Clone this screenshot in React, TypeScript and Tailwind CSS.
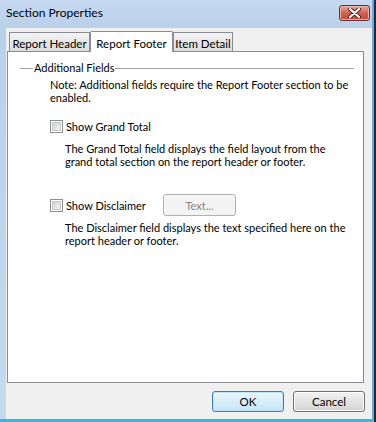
import React from 'react'

const font = { fontFamily: 'Lato, "Noto Sans", sans-serif' }

function CheckBox() {
  return (
    <span className="inline-flex h-[13px] w-[13px] shrink-0 items-center justify-center border border-[#8e8f8f] bg-white">
      <span className="h-[9px] w-[9px] border border-[#c7c9cc] bg-gradient-to-br from-[#cfd1d3] to-[#f4f4f4]" />
    </span>
  )
}

function Tab({ label, active, width }: { label: string; active?: boolean; width: string }) {
  if (active) {
    return (
      <div
        className={`relative z-10 -mb-px flex h-[21px] ${width} items-start justify-center whitespace-nowrap rounded-t-[2px] border border-b-0 border-[#898c95] bg-white pt-[3px] text-[11.5px] text-black`}
      >
        {label}
      </div>
    )
  }
  return (
    <div
      className={`flex h-[19px] ${width} items-start justify-center whitespace-nowrap border border-b-0 border-[#898c95] bg-gradient-to-b from-[#f3f3f3] to-[#dcdcdc] pt-[2px] text-[11.5px] text-black`}
    >
      {label}
    </div>
  )
}

function Button({ label, primary }: { label: string; primary?: boolean }) {
  return (
    <div
      className={`flex h-[21px] w-[72px] items-center justify-center rounded-[3px] border text-[11.5px] text-black ${
        primary
          ? 'border-[#3c7fb1] bg-gradient-to-b from-[#eaf6fd] to-[#c4e5f6] shadow-[inset_0_0_0_1px_#c1e4f7]'
          : 'border-[#707070] bg-gradient-to-b from-[#f2f2f2] to-[#d4d4d4] shadow-[inset_0_0_0_1px_#fcfcfc]'
      }`}
    >
      {label}
    </div>
  )
}

export default function App() {
  return (
    <div className="flex h-[422px] w-[376px] bg-[#1e2a36]" style={font}>
      <div className="flex h-[422px] w-[374px] flex-col border-r-2 border-[#6ea9de]">
        {/* title bar */}
        <div className="flex h-[28px] shrink-0 items-start bg-gradient-to-b from-[#c5daf0] to-[#b9d0e9] pl-[6px]">
          <span className="pt-[5px] text-[12px] leading-[15px] text-black">Section Properties</span>
          <div className="ml-auto mr-[2px] mt-[5px] flex h-[16px] w-[31px] items-center justify-center rounded-[3px] border border-[#6b3030] bg-gradient-to-b from-[#e7a89c] via-[#d2604f] to-[#c44a36] shadow-[inset_0_0_0_1px_#eab2a8]">
            <svg width="13" height="10" viewBox="0 0 13 10">
              <path d="M2 1 L11 9 M11 1 L2 9" stroke="#4a2020" strokeWidth="4" strokeLinecap="round" />
              <path d="M2 1 L11 9 M11 1 L2 9" stroke="#ffffff" strokeWidth="2.2" strokeLinecap="round" />
            </svg>
          </div>
        </div>

        <div className="flex flex-1">
          <div className="w-[6px] shrink-0 bg-gradient-to-b from-[#b9d0e9] to-[#c5daf0]" />
          <div className="flex flex-1 flex-col bg-[#f0f0f0] pl-px">
            {/* tabs */}
            <div className="mt-[3px] flex items-end pl-[2px]">
              <Tab label="Report Header" width="w-[81px]" />
              <Tab label="Report Footer" width="w-[83px]" active />
              <Tab label="Item Detail" width="w-[60px]" />
            </div>

            {/* panel */}
            <div className="h-[332px] w-[357px] border border-[#898c95] bg-white text-[11px] leading-[13px] text-black">
              <div className="mt-[9px] flex h-[14px] items-center pl-[12px] pr-[9px]">
                <div className="h-px w-[13px] bg-[#a0a0a0]" />
                <span className="px-[1px] text-[11px] leading-[14px]">Additional Fields</span>
                <div className="h-px flex-1 bg-[#a0a0a0]" />
              </div>

              <p className="ml-[42px] mt-[3px] whitespace-nowrap">
                Note: Additional fields require the Report Footer section to be
                <br />
                enabled.
              </p>

              <div className="ml-[42px] mt-[15px] flex h-[14px] items-center gap-[3px]">
                <CheckBox />
                <span>Show Grand Total</span>
              </div>
              <p className="ml-[57px] mt-[9px] whitespace-nowrap">
                The Grand Total field displays the field layout from the
                <br />
                grand total section on the report header or footer.
              </p>

              <div className="ml-[42px] mt-[26px] flex h-[22px] items-center">
                <CheckBox />
                <span className="ml-[3px] w-[97px]">Show Disclaimer</span>
                <div className="flex h-[22px] w-[73px] items-center justify-center rounded-[3px] border border-[#adb2b5] bg-[#f4f4f4] text-[#838383]">
                  Text...
                </div>
              </div>
              <p className="ml-[57px] mt-[5px] whitespace-nowrap">
                The Disclaimer field displays the text specified here on the
                <br />
                report header or footer.
              </p>
            </div>

            {/* footer buttons */}
            <div className="mt-[8px] flex justify-end gap-[9px] pr-[7px]">
              <Button label="OK" primary />
              <Button label="Cancel" />
            </div>
          </div>
        </div>
        <div className="h-[3px] shrink-0 bg-[#37b8dc]" />
      </div>
    </div>
  )
}
